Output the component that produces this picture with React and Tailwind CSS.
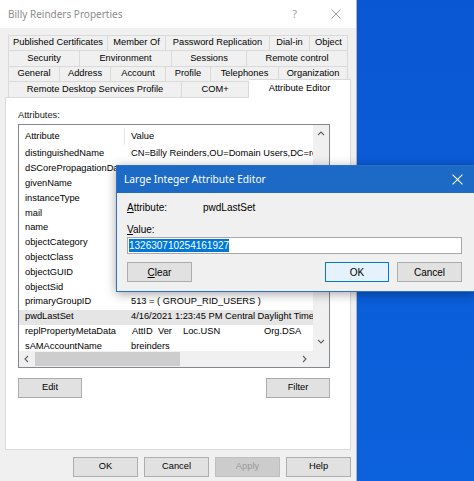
import React from 'react';

const sans = "font-['Liberation_Sans',Arial,sans-serif]";
const ui = "font-['Noto_Sans','Liberation_Sans',Arial,sans-serif]";

const tabRows = [
  [
    ['Published Certificates', 'w-[100px]'],
    ['Member Of', 'w-[58px]'],
    ['Password Replication', 'w-[104px]'],
    ['Dial-in', 'w-[40px]'],
    ['Object', 'w-[38px]'],
  ],
  [
    ['Security', 'w-[72px]'],
    ['Environment', 'w-[92px]'],
    ['Sessions', 'w-[75px]'],
    ['Remote control', 'w-[101px]'],
  ],
  [
    ['General', 'w-[52px]'],
    ['Address', 'w-[51px]'],
    ['Account', 'w-[55px]'],
    ['Profile', 'w-[45px]'],
    ['Telephones', 'w-[68px]'],
    ['Organization', 'w-[69px]'],
  ],
];

// values of the rows hidden behind the editor window are left blank
const attrs = [
  ['distinguishedName', 'CN=Billy Reinders,OU=Domain Users,DC=reinders,DC=local'],
  ['dSCorePropagationData', ''],
  ['givenName', ''],
  ['instanceType', ''],
  ['mail', ''],
  ['name', ''],
  ['objectCategory', ''],
  ['objectClass', ''],
  ['objectGUID', ''],
  ['objectSid', ''],
  ['primaryGroupID', '513 = ( GROUP_RID_USERS )'],
  ['pwdLastSet', '4/16/2021 1:23:45 PM Central Daylight Time'],
  ['replPropertyMetaData', null],
  ['sAMAccountName', 'breinders'],
];

const Btn = ({ children, className = '' }) => (
  <div className={`flex items-center justify-center h-[20px] border border-[#adadad] bg-[#e1e1e1] text-black ${className}`}>
    {children}
  </div>
);

const CloseX = ({ color, size = 10 }) => (
  <svg width={size} height={size} viewBox="0 0 10 10">
    <path d="M0.5 0.5 L9.5 9.5 M9.5 0.5 L0.5 9.5" stroke={color} strokeWidth="1" fill="none" />
  </svg>
);

const Chevron = ({ dir }) => {
  const d = {
    up: 'M1 5 L4 2 L7 5',
    down: 'M1 2 L4 5 L7 2',
    left: 'M5 1 L2 4 L5 7',
    right: 'M2 1 L5 4 L2 7',
  }[dir];
  return (
    <svg width="8" height="8" viewBox="0 0 8 8">
      <path d={d} stroke="#606060" strokeWidth="1.1" fill="none" />
    </svg>
  );
};

export default function App() {
  return (
    <div className={`relative flex w-[474px] h-[481px] overflow-hidden ${sans}`}>
      {/* Properties dialog */}
      <div className="flex flex-col w-[357px] h-full bg-[#f0f0f0] border-r border-[#b4b4b4]">
        <div className="flex items-center h-[28px] bg-white pl-[8px]">
          <span className={`text-[10px] text-[#8c8c8c] ${ui}`}>Billy Reinders Properties</span>
          <span className={`ml-auto text-[11px] text-[#a0a0a0] ${ui}`}>?</span>
          <div className="ml-[34px] mr-[15px] flex items-center">
            <CloseX color="#a0a0a0" size={10} />
          </div>
        </div>

        <div className="pt-[7px]">
          {tabRows.map((row, i) => (
            <div key={i} className={`flex ml-[8px] ${i === 1 ? 'h-[16px]' : 'h-[15px]'}`}>
              {row.map(([label, w]) => (
                <div
                  key={label}
                  className={`${w} flex items-center justify-center border-t border-r border-[#dadada] first:border-l text-[9.3px] text-black whitespace-nowrap`}
                >
                  {label}
                </div>
              ))}
            </div>
          ))}
          <div className="flex h-[16px] ml-[8px]">
            <div className="w-[174px] flex items-center justify-center border-t border-l border-r border-[#dadada] text-[9.3px] whitespace-nowrap">
              Remote Desktop Services Profile
            </div>
            <div className="w-[67px] flex items-center justify-center border-t border-r border-[#dadada] text-[9.3px]">
              COM+
            </div>
            <div className="w-[102px] -mt-[2px] h-[19px] flex items-center justify-center bg-white border-t border-r border-[#dadada] text-[9.3px] relative z-10">
              Attribute Editor
            </div>
          </div>
        </div>

        {/* Tab page */}
        <div className="ml-[5px] w-[346px] h-[353px] bg-white border border-[#dadada] px-[12px]">
          <div className="mt-[11px] h-[12px] leading-[12px] text-[9.3px] text-[#1a1a1a]">Attributes:</div>
          <div className="mt-[3px] w-[312px] h-[244px] border border-[#828790] flex flex-col">
            <div className="flex h-[226px]">
              <div className="flex-1 min-w-0 overflow-hidden text-[9.3px] text-black">
                <div className="flex items-center h-[22px] pt-[1px]">
                  <div className="w-[105px] shrink-0 pl-[6px]">Attribute</div>
                  <div className="w-px h-[17px] shrink-0 bg-[#e5e5e5]"></div>
                  <div className="pl-[6px]">Value</div>
                </div>
                <div>
                  {attrs.map(([name, val]) => (
                    <div
                      key={name}
                      className={`flex items-center h-[14.8px] whitespace-nowrap ${name === 'pwdLastSet' ? 'bg-[#e5e5e5]' : ''}`}
                    >
                      <div className="w-[106px] shrink-0 pl-[6px] overflow-hidden">{name}</div>
                      <div className="pl-[6px] flex shrink-0">
                        {val === null ? (
                          <>
                            <span className="w-[27px] pl-[1px]">AttID</span>
                            <span className="w-[25px]">Ver</span>
                            <span className="w-[81px]">Loc.USN</span>
                            <span>Org.DSA</span>
                          </>
                        ) : (
                          val
                        )}
                      </div>
                    </div>
                  ))}
                </div>
              </div>
              <div className="w-[16px] shrink-0 bg-[#f0f0f0] flex flex-col items-center justify-between py-[5px]">
                <Chevron dir="up" />
                <Chevron dir="down" />
              </div>
            </div>
            <div className="flex h-[16px] bg-[#f0f0f0]">
              <div className="w-[16px] flex items-center justify-center">
                <Chevron dir="left" />
              </div>
              <div className="w-[145px] my-[1px] bg-[#cdcdcd]"></div>
              <div className="flex-1"></div>
              <div className="w-[16px] flex items-center justify-center">
                <Chevron dir="right" />
              </div>
              <div className="w-[16px]"></div>
            </div>
          </div>
          <div className="mt-[10px] flex justify-between w-[312px] text-[9.3px]">
            <Btn className="w-[64px]">Edit</Btn>
            <Btn className="w-[64px]">Filter</Btn>
          </div>
        </div>

        <div className="mt-[7px] flex justify-end gap-[6px] pr-[5px] text-[9.3px]">
          <Btn className="w-[65px]">OK</Btn>
          <Btn className="w-[65px]">Cancel</Btn>
          <div className="flex items-center justify-center w-[65px] h-[20px] border border-[#bfbfbf] bg-[#cccccc] text-[#9a9a9a]">
            Apply
          </div>
          <Btn className="w-[65px]">Help</Btn>
        </div>
      </div>

      {/* Desktop */}
      <div className="flex-1 h-full bg-gradient-to-b from-[#0a57d3] to-[#0c62dc]"></div>

      {/* Large Integer Attribute Editor window */}
      <div className="absolute left-[116px] top-[165px] w-[362px] h-[127px] border border-[#2a6fc8] bg-[#f0f0f0] shadow-[0_2px_10px_rgba(0,0,0,0.35)] flex flex-col">
        <div className="flex items-center h-[27px] bg-[#1c6ac5] pl-[7px] pr-[14px]">
          <span className={`text-[10.2px] text-white ${ui}`}>Large Integer Attribute Editor</span>
          <div className="ml-auto">
            <CloseX color="#ffffff" size={11} />
          </div>
        </div>
        <div className="pl-[10px] pr-[15px] text-[10px] text-black">
          <div className="flex mt-[9px] h-[12px] leading-[12px]">
            <span className="w-[76px]"><span className="underline">A</span>ttribute:</span>
            <span>pwdLastSet</span>
          </div>
          <div className="mt-[10px] h-[12px] leading-[12px]">
            <span className="underline">V</span>alue:
          </div>
          <div className="mt-[1px] h-[17px] border border-[#a8a8a8] bg-white flex items-center pl-[1px]">
            <span className="bg-[#0078d7] text-white leading-[13px]">132630710254161927</span>
          </div>
          <div className="mt-[8px] flex">
            <Btn className="w-[65px]">
              <span><span className="underline">C</span>lear</span>
            </Btn>
            <div className="ml-auto flex items-center justify-center w-[64px] h-[20px] border border-[#0078d7] bg-[#e5f1fb]">
              OK
            </div>
            <Btn className="ml-[8px] w-[65px]">Cancel</Btn>
          </div>
        </div>
      </div>
    </div>
  );
}
